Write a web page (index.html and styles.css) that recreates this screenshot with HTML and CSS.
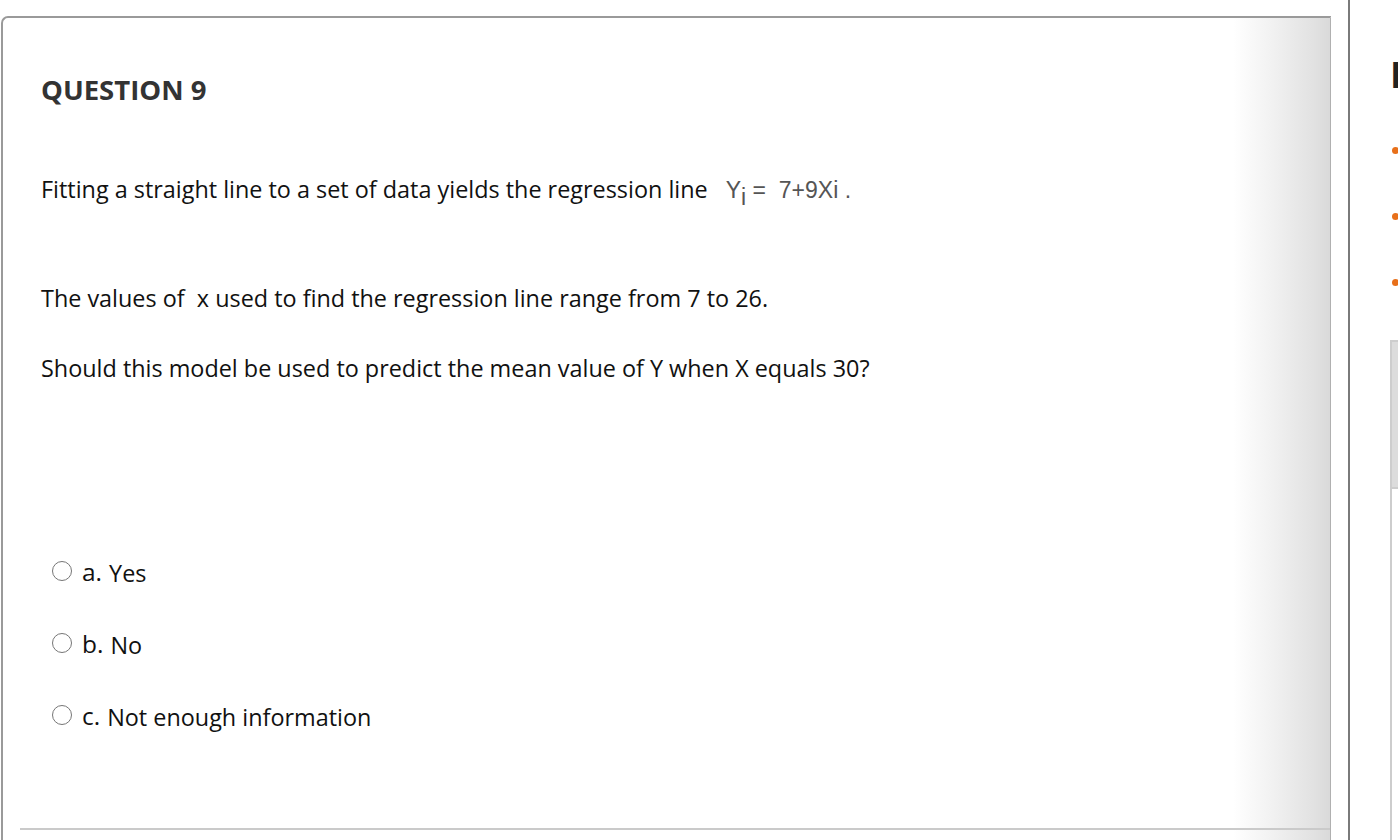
FILE: index.html
```html
<!DOCTYPE html>
<html>
<head>
<meta charset="utf-8">
<link rel="stylesheet" href="styles.css">
</head>
<body>
<div class="page">
  <div class="main">
    <div class="card">
      <h2 class="qtitle">QUESTION 9</h2>
      <p class="q q1">Fitting a straight line to a set of data yields the regression line <span class="eq">Y<sub>i</sub> = &nbsp;7+9Xi .</span></p>
      <p class="q q2">The values of &nbsp;x used to find the regression line range from 7 to 26.</p>
      <p class="q q3">Should this model be used to predict the mean value of Y when X equals 30?</p>
      <ul class="options">
        <li class="opt"><span class="radio"></span><span class="letter">a.</span><span class="ans">Yes</span></li>
        <li class="opt"><span class="radio"></span><span class="letter">b.</span><span class="ans">No</span></li>
        <li class="opt"><span class="radio"></span><span class="letter">c.</span><span class="ans">Not enough information</span></li>
      </ul>
      <div class="sep"></div>
    </div>
  </div>
  <div class="divider"></div>
  <div class="side">
    <div class="side-title">Instructions</div>
    <ul class="side-list">
      <li>Item one</li>
      <li>Item two</li>
      <li>Item three</li>
    </ul>
    <div class="side-box"></div>
    <div class="side-rule"></div>
  </div>
</div>
</body>
</html>
```

FILE: styles.css
```css
html, body {
  margin: 0;
  padding: 0;
  background: #fff;
  overflow: hidden;
}
.page {
  display: flex;
  width: 1398px;
  height: 840px;
  overflow: hidden;
  font-family: "Open Sans", "Liberation Sans", sans-serif;
}
.main {
  width: 1331px;
  flex: none;
  padding-top: 16px;
  padding-left: 1px;
  box-sizing: border-box;
}
.card {
  height: 824px;
  box-sizing: border-box;
  border-top: 2px solid #9a9a9a;
  border-left: 2px solid #9a9a9a;
  border-right: 1px solid #b0b0b0;
  border-top-left-radius: 7px;
  padding: 54px 0 0 38px;
  background: linear-gradient(to right, #fff 0, #fff 1230px, #f1f1f1 1270px, #e2e2e2 1310px, #d9d9d9 1328px);
  position: relative;
}
.qtitle {
  margin: 0;
  font-size: 27.5px;
  line-height: 36px;
  font-weight: 700;
  color: #333;
}
.q {
  margin: 0;
  font-size: 23.4px;
  line-height: 30px;
  color: #111;
}
.q1 { margin-top: 66px; }
.q2 { margin-top: 78px; }
.q3 { margin-top: 40px; }
.eq {
  font-family: "Liberation Sans", Arial, sans-serif;
  font-size: 23px;
  color: #555;
  margin-left: 12px;
}
.eq sub {
  font-size: 23px;
  vertical-align: -7px;
  line-height: 0;
}
.options {
  list-style: none;
  margin: 170px 0 0 0;
  padding: 0;
}
.opt {
  display: flex;
  align-items: center;
  height: 36px;
  margin-bottom: 36px;
  color: #111;
}
.radio {
  width: 18px;
  height: 18px;
  border: 1.5px solid #767676;
  border-radius: 50%;
  margin-left: 11px;
  margin-right: 10px;
  flex: none;
}
.letter {
  font-size: 24.5px;
  margin-right: 7px;
}
.ans {
  font-size: 23.4px;
  position: relative;
  top: 2px;
}
.sep {
  position: absolute;
  left: 17px;
  right: 0;
  top: 810px;
  height: 2px;
  background: #cacaca;
}
.divider {
  width: 2px;
  flex: none;
  margin-left: 17px;
  background: #7a7a7a;
}
.side {
  flex: 1;
  position: relative;
  overflow: hidden;
  padding-left: 43px;
}
.side-title {
  margin-top: 56px;
  margin-left: -3px;
  font-size: 36px;
  line-height: 38px;
  font-weight: 700;
  color: #222;
  white-space: nowrap;
}
.side-list {
  list-style: none;
  margin: 53px 0 0 0;
  padding: 0;
}
.side-list li {
  position: relative;
  height: 66px;
  white-space: nowrap;
  color: transparent;
  font-size: 16px;
}
.side-list li::before {
  content: "";
  position: absolute;
  left: -1px;
  top: 0;
  width: 7px;
  height: 7px;
  border-radius: 50%;
  background: #e8701a;
}
.side-box {
  margin-top: -5px;
  margin-left: -3px;
  height: 145px;
  width: 40px;
  background: #dcdcdc;
  border: 2px solid #cdcdcd;
  border-right: none;
}
.side-rule {
  margin-left: -3px;
  width: 2px;
  height: 360px;
  background: #cdcdcd;
}
```
